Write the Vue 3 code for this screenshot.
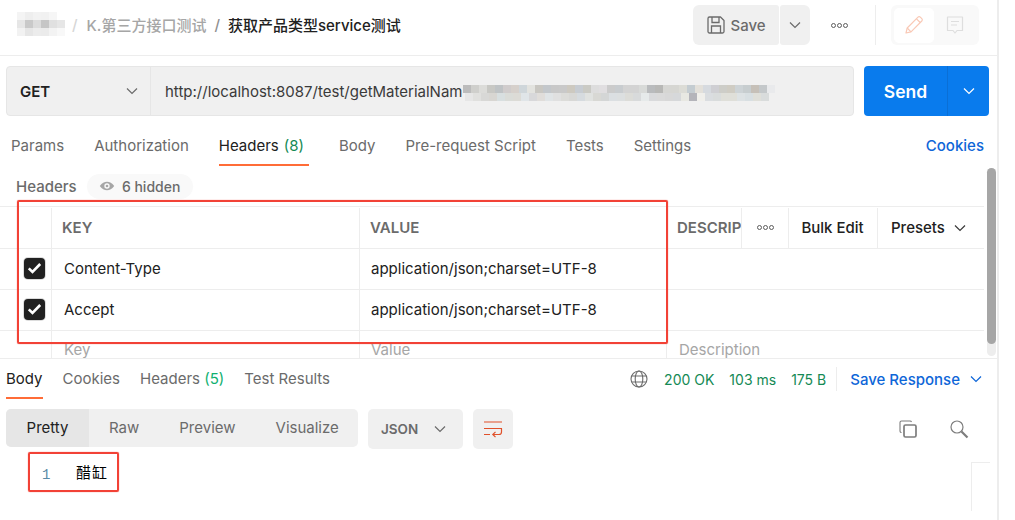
<script setup>
const blur1 = [
  [0,0,'#f4f4f4'],[1,0,'#eeeeee'],[2,0,'#f2f2f2'],[3,0,'#f1f1f1'],[4,0,'#f6f6f6'],
  [0,1,'#e6e6e6'],[1,1,'#c9c9c9'],[2,1,'#dcdcdc'],[3,1,'#c6c6c6'],[4,1,'#e0e0e0'],[5,1,'#e6e6e6'],
  [0,2,'#f2f2f2'],[1,2,'#e6e6e6'],[2,2,'#ececec'],[3,2,'#ebebeb'],[4,2,'#f3f3f3'],[5,2,'#f8f8f8']
]
const topShades = ['#bcbcbc','#cfcfcc','#dcdcd9','#c8c8c4','#bfc3c5','#d0cccc','#d6d0cb','#cfd6da','#e3e3df','#c9c7c2','#c3c7cb','#c8c8c8','#c9c9c9','#cdc9c0','#c7ccd2','#cacac4','#dddddd','#e0dee0','#cbcbcb','#c8cccf','#d3d3d3','#d3d3d3','#d8dad8','#b9bbbd','#b8b8b6','#d6d6d3','#d6d6d2','#dcdcd6','#c4ccd1','#e3e0da','#d6dadf','#cfcfd3','#cdcdc8','#cfccc3','#cdd3d6','#c7cdcf','#c6c0b8','#c4c8ca','#e9eaec']
const botShades = ['#e6e6e6','#e0e0de','#d8d8d6','#d8d6d2','#d8dfe0','#dadcd8','#dcdbd6','#e0e5e8','#d8d8da','#e0ddda','#e0e4e6','#e0e0e0','#dcdcd9','#d8d8d6','#d6dbdf','#e0e2e0','#d8d8d4','#d4d6d6','#dbdfe2','#dcdfe0','#dcdcd8','#d8dadb','#e6eaea','#d9dadc','#dadada','#d8d8d8','#d6d8da','#e8e8e2','#b4b4ba','#f0efeb','#dadde0','#d9dcdc','#dfdfd9','#dfdfd9','#dde2e4','#d8dfe2','#dfdfd9','#d9dcdc']
const tabs = ['Params','Authorization','Headers','Body','Pre-request Script','Tests','Settings']
const rows = [
  { key: 'Content-Type', value: 'application/json;charset=UTF-8' },
  { key: 'Accept', value: 'application/json;charset=UTF-8' }
]
</script>

<template>
  <div class="page">
    <main class="app">
      <header class="topbar">
        <nav class="crumbs">
          <svg class="blur-name" width="50" height="24" aria-hidden="true">
            <rect v-for="(c, i) in blur1" :key="i" :x="c[0] * 8" :y="c[1] * 8" width="8" height="8" :fill="c[2]" />
          </svg>
          <span class="sep faint">/</span>
          <span class="folder">K.第三方接口测试</span>
          <span class="sep">/</span>
          <span class="current">获取产品类型service测试</span>
        </nav>
        <div class="actions">
          <div class="save">
            <svg width="20" height="20" viewBox="0 0 20 20" fill="none" stroke="#6b6b6b" stroke-width="1.3">
              <path d="M2 3.500A1.500 1.500 0 0 1 3.500 2h11l3.500 3.500v11a1.500 1.500 0 0 1-1.500 1.500h-13A1.500 1.500 0 0 1 2 16.500z" stroke-linejoin="round" />
              <path d="M6 2v5.500h7V2M5.500 18v-7h9v7" />
            </svg>
            <span>Save</span>
          </div>
          <div class="save-more">
            <svg class="chev" width="12" height="8" viewBox="0 0 12 8"><path d="M1 1.5l5 5 5-5" /></svg>
          </div>
          <div class="dots"><i></i><i></i><i></i></div>
          <div class="vline"></div>
          <div class="mode">
            <div class="mode-on">
              <svg width="20" height="20" viewBox="0 0 20 20" fill="none" stroke="#f9c9b6" stroke-width="1.2">
                <path d="M2 18l1.2-5L14 2.2a1.6 1.6 0 0 1 2.3 0l1.5 1.5a1.6 1.6 0 0 1 0 2.3L7 16.8z" stroke-linejoin="round" />
                <path d="M12.5 3.8l3.7 3.7M3.2 13l3.8 3.8" />
              </svg>
            </div>
            <div class="mode-off">
              <svg width="20" height="20" viewBox="0 0 20 20" fill="none" stroke="#dedede" stroke-width="1.2">
                <path d="M2.5 2h15v13.5h-5.5L10 18l-2-2.500H2.500z" stroke-linejoin="round" />
                <path d="M6 6.500h8M6 10h6" />
              </svg>
            </div>
          </div>
        </div>
      </header>

      <section class="request">
        <div class="url-box">
          <div class="method">
            <span>GET</span>
            <svg class="chev" width="12" height="8" viewBox="0 0 12 8"><path d="M1 1.5l5 5 5-5" /></svg>
          </div>
          <div class="url">
            <span class="url-text">http://localhost:8087/test/getMaterialNam</span>
            <svg class="blur-url" width="316" height="16" aria-hidden="true">
              <rect v-for="(c, i) in topShades" :key="'t' + i" :x="i * 8" y="0" width="8" height="8" :fill="c" />
              <rect v-for="(c, i) in botShades" :key="'b' + i" :x="i * 8 + 2" y="8" width="8" height="8" :fill="c" />
            </svg>
          </div>
        </div>
        <div class="send">
          <span class="send-label">Send</span>
          <span class="send-more">
            <svg class="chev white" width="12" height="8" viewBox="0 0 12 8"><path d="M1 1.5l5 5 5-5" /></svg>
          </span>
        </div>
      </section>

      <nav class="req-tabs">
        <span v-for="t in tabs" :key="t" class="req-tab" :class="{ on: t === 'Headers' }">
          {{ t }}<em v-if="t === 'Headers'" class="count">(8)</em>
        </span>
        <span class="cookies">Cookies</span>
      </nav>

      <div class="headers-row">
        <span class="headers-title">Headers</span>
        <span class="pill">
          <svg width="16" height="10" viewBox="0 0 16 10" fill="none">
            <path d="M.8 5C3 2 5.300.8 8 .8S13 2 15.200 5C13 8 10.700 9.200 8 9.200S3 8 .8 5z" fill="#a6a6a6" />
            <circle cx="8" cy="5" r="2.700" fill="#f9f9f9" />
            <circle cx="8" cy="5" r="1.300" fill="#a6a6a6" />
          </svg>
          6 hidden
        </span>
      </div>

      <div class="table">
        <div class="tr head">
          <div class="td c0"></div>
          <div class="td c1">KEY</div>
          <div class="td c2">VALUE</div>
          <div class="td c3 descrip">DESCRIP</div>
          <div class="td c4"><div class="dots small"><i></i><i></i><i></i></div></div>
          <div class="td c5 strong">Bulk Edit</div>
          <div class="td c6 strong">Presets
            <svg class="chev dark" width="12" height="8" viewBox="0 0 12 8"><path d="M1 1.500l5 5 5-5" /></svg>
          </div>
        </div>
        <div v-for="r in rows" :key="r.key" class="tr body">
          <div class="td c0">
            <span class="check">
              <svg width="15" height="12" viewBox="0 0 15 12" fill="none"><path d="M1.800 6.300l3.700 3.700 7.700-8" stroke="#fff" stroke-width="2.600" /></svg>
            </span>
          </div>
          <div class="td c1 cell">{{ r.key }}</div>
          <div class="td c2 cell">{{ r.value }}</div>
          <div class="td c3 rest"></div>
        </div>
        <div class="tr ghost">
          <div class="td c0"></div>
          <div class="td c1 cell">Key</div>
          <div class="td c2 cell">Value</div>
          <div class="td c3 cell rest">Description</div>
        </div>
      </div>

      <section class="response">
        <div class="res-head">
          <nav class="res-tabs">
            <span class="res-tab on">Body</span>
            <span class="res-tab">Cookies</span>
            <span class="res-tab">Headers <em class="count">(5)</em></span>
            <span class="res-tab">Test Results</span>
          </nav>
          <div class="status">
            <svg width="18" height="18" viewBox="0 0 18 18" fill="none" stroke="#6b6b6b" stroke-width="1.100">
              <circle cx="9" cy="9" r="8" />
              <ellipse cx="9" cy="9" rx="3.800" ry="8" />
              <path d="M1.800 6h14.400M1.800 12h14.400" />
            </svg>
            <span class="ok first">200 OK</span>
            <span class="ok">103 ms</span>
            <span class="ok">175 B</span>
            <span class="status-line"></span>
            <span class="save-res">Save Response</span>
            <svg class="chev blue" width="12" height="8" viewBox="0 0 12 8"><path d="M1 1.500l5 5 5-5" /></svg>
          </div>
        </div>

        <div class="toolbar">
          <div class="views">
            <span class="view on">Pretty</span>
            <span class="view raw">Raw</span>
            <span class="view preview">Preview</span>
            <span class="view visual">Visualize</span>
          </div>
          <div class="format">
            <span>JSON</span>
            <svg class="chev" width="12" height="8" viewBox="0 0 12 8"><path d="M1 1.500l5 5 5-5" /></svg>
          </div>
          <div class="wrap">
            <svg width="20" height="18" viewBox="0 0 20 18" fill="none" stroke="#e0512b" stroke-width="1.200">
              <path d="M1 2h18M1 8.500h18M1 14.500h6" />
              <path d="M18.500 8.500v3.500a2.500 2.500 0 0 1-2.500 2.500H10M12.500 11.800L9.800 14.500l2.700 2.700" />
            </svg>
          </div>
          <div class="tools">
            <svg width="20" height="20" viewBox="0 0 20 20" fill="none" stroke="#7d7d7d">
              <path d="M3.500 13.500h-.5a1.500 1.500 0 0 1-1-1.500V3.500A1.500 1.500 0 0 1 3.500 2H12a1.500 1.500 0 0 1 1.500 1" stroke-width="1.100" />
              <rect x="6" y="6" width="12" height="12" rx="1.500" stroke-width="1.700" />
            </svg>
            <svg width="20" height="20" viewBox="0 0 20 20" fill="none" stroke="#7d7d7d">
              <circle cx="8" cy="8" r="6" stroke-width="1.200" />
              <path d="M12.500 12.500l6 6" stroke-width="2.200" />
            </svg>
          </div>
        </div>

        <div class="code">
          <span class="ln">1</span>
          <span class="src">醋缸</span>
          <div class="corner"></div>
        </div>
      </section>

      <div class="scroll"><div class="thumb"></div></div>
      <div class="mark mark-table"></div>
      <div class="mark mark-code"></div>
    </main>
  </div>
</template>

<style>
html, body { margin: 0; background: #fff; }
</style>

<style scoped>
.page { width: 1015px; height: 520px; overflow: hidden; background: #fff; font-family: Inter, "Noto Sans CJK SC", sans-serif; font-size: 15px; color: #212121; }
.app { position: relative; width: 997px; height: 520px; border-right: 2px solid #ededed; box-sizing: content-box; }
em { font-style: normal; }

.chev { fill: none; stroke: #6b6b6b; stroke-width: 1.200; }
.chev.white { stroke: #fff; }
.chev.dark { stroke: #3a3a3a; }
.chev.blue { stroke: #0e66d8; }

.topbar { height: 50px; padding-bottom: 5px; border-bottom: 1px solid #ededed; display: flex; align-items: center; justify-content: space-between; }
.crumbs { display: flex; align-items: center; padding-left: 17px; font-weight: 500; position: relative; top: -1px; }
.actions { position: relative; }
.blur-name { flex: none; }
.sep { color: #8f8f8f; margin: 0 8px 0 8px; }
.sep.faint { color: #d6d6d6; margin: 0 9px 0 5px; }
.folder { color: #a6a6a6; }
.current { color: #212121; }

.actions { display: flex; align-items: center; height: 40px; padding-right: 18px; }
.save { width: 86px; height: 40px; background: #f0f0f0; border-radius: 6px 3px 3px 6px; display: flex; align-items: center; justify-content: center; gap: 4px; color: #6b6b6b; font-weight: 500; }
.save-more { width: 30px; height: 40px; margin-left: 1px; background: #f0f0f0; border-radius: 3px 6px 6px 3px; display: flex; align-items: center; justify-content: center; }
.dots { display: flex; gap: 1px; }
.dots i { width: 5px; height: 5px; border: 1px solid #5c5c5c; border-radius: 50%; box-sizing: border-box; }
.actions > .dots { margin: 0 26px 0 21px; width: 18px; }
.vline { width: 1px; height: 40px; background: #ededed; margin-right: 15px; }
.mode { width: 88px; height: 40px; background: #f9f9f9; border-radius: 6px; display: flex; align-items: center; padding-left: 3px; box-sizing: border-box; }
.mode-on { width: 40px; height: 35px; background: #fff; border-radius: 5px; display: flex; align-items: center; justify-content: center; }
.mode-off { width: 41px; display: flex; justify-content: center; }

.request { display: flex; margin: 10px 8px 0 6px; height: 50px; gap: 10px; }
.url-box { flex: 1; display: flex; background: #f0f0f0; border: 1px solid #e6e6e6; border-radius: 4px; box-sizing: border-box; }
.method { width: 144px; border-right: 1px solid #e6e6e6; box-sizing: border-box; display: flex; align-items: center; justify-content: space-between; padding: 0 12px 0 13px; font-weight: 600; }
.url { position: relative; flex: 1; display: flex; align-items: center; padding-left: 14px; overflow: hidden; }
.url-text { white-space: nowrap; color: #3a3a3a; }
.blur-url { position: absolute; left: 312px; top: 18px; }
.send { width: 125px; background: #097bed; border-radius: 4px; color: #fff; display: flex; align-items: center; font-weight: 600; font-size: 17.5px; }
.send-label { width: 84px; height: 100%; display: flex; align-items: center; justify-content: center; border-right: 1px solid #0a6fd6; box-sizing: border-box; }
.send-more { flex: 1; display: flex; justify-content: center; }

.req-tabs { display: flex; height: 50px; margin-left: 11px; margin-right: 13px; gap: 30px; align-items: stretch; }
.req-tab { display: flex; align-items: center; padding-top: 10px; padding-bottom: 2px; box-sizing: border-box; color: #6b6b6b; white-space: nowrap; }
.req-tab.on { color: #212121; border-bottom: 2px solid #ff6c37; padding-bottom: 0; padding-right: 5px; }
.count { color: #158a55; margin-left: 5px; }
.cookies { margin-left: auto; color: #0e66d8; font-weight: 500; display: flex; align-items: center; padding-top: 10px; padding-bottom: 2px; }

.headers-row { display: flex; align-items: center; height: 40px; padding-left: 16px; gap: 10px; }
.headers-title { font-weight: 500; color: #6b6b6b; }
.pill { width: 106px; height: 25px; background: #f9f9f9; border-radius: 13px; display: inline-flex; align-items: center; justify-content: center; gap: 7px; color: #6b6b6b; font-weight: 500; font-size: 14px; }

.table { width: 984px; height: 152px; overflow: hidden; border-top: 1px solid #ededed; box-sizing: border-box; }
.tr { display: flex; height: 41px; border-bottom: 1px solid #ededed; box-sizing: border-box; }
.tr.head { height: 42px; font-weight: 600; color: #6b6b6b; }
.td { display: flex; align-items: center; border-right: 1px solid #ededed; box-sizing: border-box; white-space: nowrap; }
.head .td { margin-top: 1px; padding-bottom: 1px; }
.body .td { padding-bottom: 2px; }
.c0 { width: 52px; justify-content: flex-start; padding-left: 24px; }
.c1 { width: 308px; padding-left: 10px; }
.c2 { width: 307px; padding-left: 10px; }
.c3 { width: 75px; padding-left: 10px; overflow: hidden; }
.c4 { width: 47px; justify-content: center; }
.c5 { width: 89px; justify-content: center; padding-right: 1px; }
.c6 { flex: 1; border-right: none; padding-left: 13px; gap: 9px; }
.head .strong { color: #212121; font-weight: 500; }
.cell { padding-left: 12px; }
.c2.cell { padding-left: 11px; }
.rest { flex: 1; border-right: none; }
.check { width: 21px; height: 21px; border-radius: 4px; background: #212121; box-shadow: 0 0 0 1px #dcdcdc; display: flex; align-items: center; justify-content: center; }
.ghost { height: 27px; color: #a6a6a6; border-bottom: none; line-height: 16px; }
.ghost .td { padding-top: 10px; }

.response { border-top: 1px solid #ededed; position: relative; height: 161px; }
.res-head { display: flex; justify-content: space-between; height: 40px; padding: 0 15px 0 6px; }
.res-tabs { display: flex; gap: 20px; }
.res-tab { display: flex; align-items: center; color: #6b6b6b; padding-bottom: 2px; box-sizing: border-box; white-space: pre; }
.res-tab .count { margin-left: 0; color: #10b070; }
.res-tab.on { color: #212121; border-bottom: 2px solid #ff6c37; padding-bottom: 0; }
.status { display: flex; align-items: center; font-size: 14px; }
.ok { color: #158a55; margin-left: 15px; }
.ok.first { margin-left: 16px; }
.status-line { width: 1px; height: 24px; background: #ededed; margin: 0 13px 0 10px; }
.save-res { color: #0e66d8; font-weight: 500; font-size: 15px; margin-right: 10px; }

.toolbar { display: flex; margin: 10px 0 0 6px; align-items: flex-start; height: 40px; }
.views { width: 352px; height: 38px; background: #f0f0f0; border-radius: 5px; display: flex; overflow: hidden; color: #6b6b6b; }
.view { display: flex; align-items: center; padding-bottom: 1px; }
.view.on { width: 83px; justify-content: center; background: #e6e6e6; color: #212121; }
.view.raw { margin-left: 20px; }
.view.preview { margin-left: 40px; }
.view.visual { margin-left: 40px; }
.format { width: 95px; height: 40px; margin-left: 10px; background: #f0f0f0; border-radius: 5px; display: flex; align-items: center; justify-content: space-between; padding: 0 17px 0 13px; box-sizing: border-box; color: #6b6b6b; font-weight: 600; font-size: 13.500px; }
.wrap { width: 40px; height: 40px; margin-left: 10px; background: #f0f0f0; border-radius: 5px; display: flex; align-items: center; justify-content: center; }
.tools { display: flex; gap: 31px; margin-left: 385px; padding-top: 10px; }

.code { position: relative; height: 62px; display: flex; align-items: flex-start; font-family: "Liberation Mono", "Noto Sans CJK SC", monospace; font-size: 14px; padding-top: 16px; box-sizing: border-box; }
.ln { margin-left: 42px; width: 34px; color: #5a8aa6; line-height: 20px; }
.src { color: #000; font-size: 15px; line-height: 20px; letter-spacing: 1px; }
.corner { position: absolute; left: 971px; top: 13px; width: 18px; bottom: 0; border-top: 1px solid #ededed; border-left: 1px solid #ededed; }

.scroll { position: absolute; left: 987px; top: 168px; width: 9px; height: 188px; background: #ededed; border-radius: 5px; }
.thumb { height: 176px; background: #a6a6a6; border-radius: 5px; }

.mark { position: absolute; border: 2px solid #f24236; border-radius: 2px; box-sizing: border-box; pointer-events: none; box-shadow: 0 0 1px #f24236; }
.mark-table { left: 17px; top: 200px; width: 651px; height: 144px; }
.mark-code { left: 28px; top: 452px; width: 91px; height: 40px; }
</style>
